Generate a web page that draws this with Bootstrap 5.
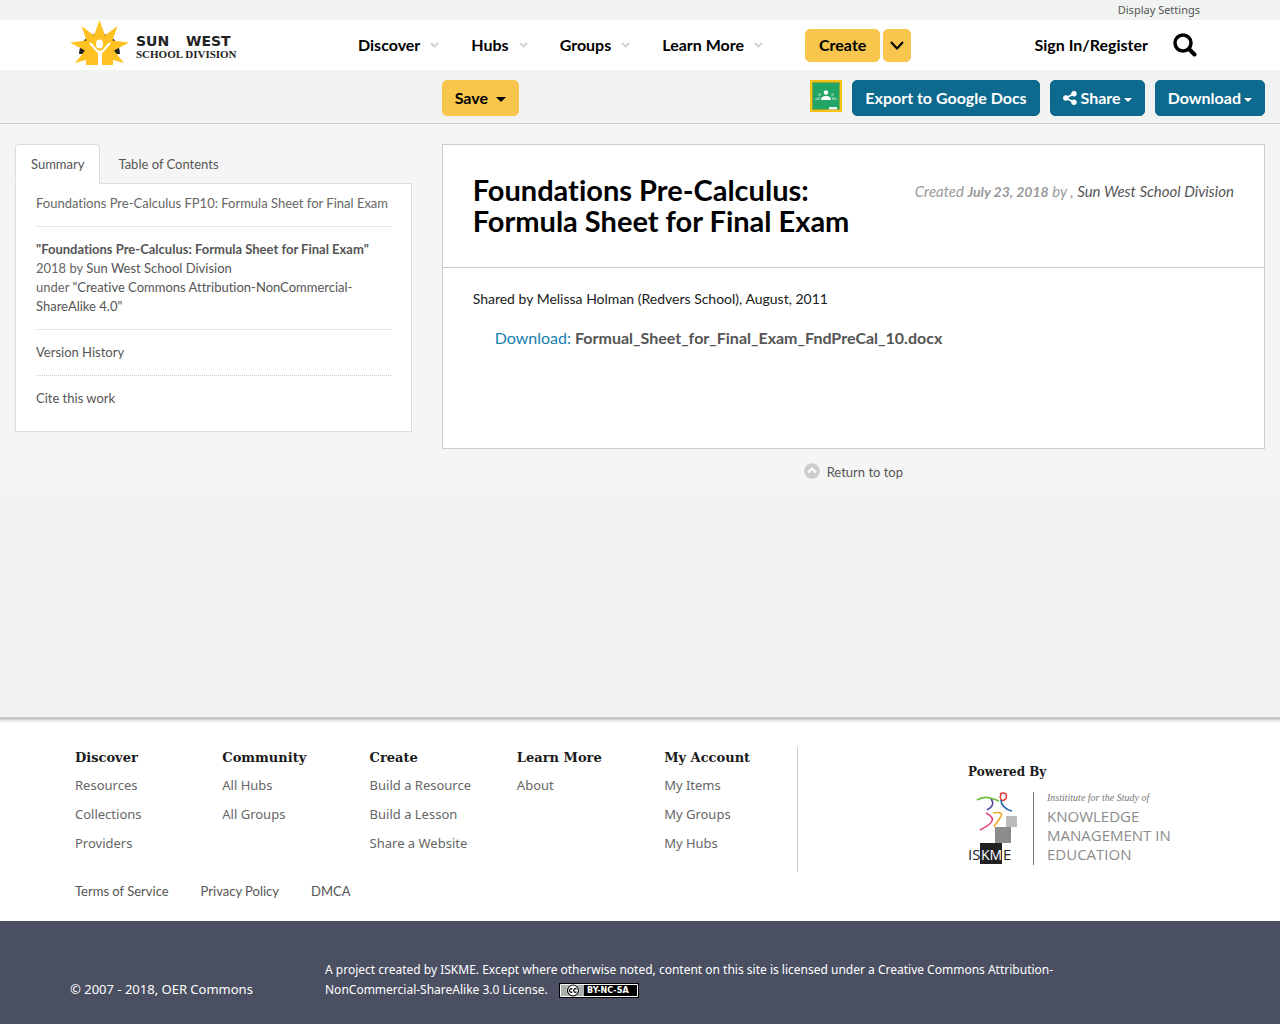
<!DOCTYPE html>
<html lang="en">
<head>
<meta charset="utf-8">
<meta name="viewport" content="width=device-width, initial-scale=1">
<title>Foundations Pre-Calculus: Formula Sheet for Final Exam</title>
<link href="https://cdn.jsdelivr.net/npm/bootstrap@5.3.0/dist/css/bootstrap.min.css" rel="stylesheet">
<style>
:root{--ui:Lato,"Liberation Sans",sans-serif;--alt:"Noto Sans","Open Sans",sans-serif;--slab:"DejaVu Serif",serif}
body{background:#f0f3f2;font-family:var(--ui);font-size:13px;line-height:19px;color:#1a1a1a;min-height:100vh;font-variant-ligatures:none}
a{color:#555;text-decoration:none}
a:hover{text-decoration:underline}
.site-wrap{max-width:1140px;margin:0 auto}
.display-bar{height:20px;font-family:var(--alt);font-size:11px;line-height:20px}
.display-bar .site-wrap{padding-right:10px}
.site-head{background:#fff;height:50px}
.site-nav{font-size:16px;font-weight:700;line-height:20px}
.site-nav a{color:#000}
.main-links{gap:32px;margin-left:124px}
.main-links a{gap:10px}
.search-link{margin:0 13px 0 25px}
.btn-gold{--bs-btn-bg:#f8c54d;--bs-btn-color:#000;--bs-btn-hover-bg:#eeb93c;--bs-btn-hover-color:#000;--bs-btn-border-color:#f8c54d;--bs-btn-hover-border-color:#eeb93c}
.btn-teal{--bs-btn-bg:#0d698d;--bs-btn-color:#fff;--bs-btn-hover-bg:#0a5673;--bs-btn-hover-color:#fff;--bs-btn-border-color:#0d698d;--bs-btn-hover-border-color:#0a5673}
.btn-gold,.btn-teal{--bs-btn-font-weight:700;--bs-btn-font-size:16px;--bs-btn-padding-x:12px;--bs-btn-padding-y:7px;--bs-btn-line-height:20px;--bs-btn-border-radius:5px}
.site-head .btn-gold{--bs-btn-padding-x:13px;--bs-btn-padding-y:5px;height:33px}
.site-head .btn-arrow{--bs-btn-padding-x:6px;margin-left:3px}
.create-group{margin-left:42px}
.tri{display:inline-block;border:4px solid transparent;border-top-color:currentColor;border-bottom:0;vertical-align:middle;margin-left:3px}
.btn-gold .tri{border-width:5px 5px 0;margin-left:8px}
.btn-teal svg{vertical-align:-1px}
.tool-bar{height:54px;border-bottom:1px solid #d0d0d0;padding:10px 15px 0}
.tool-items{gap:10px}
.gut{--bs-gutter-x:30px}
.work-area{background:#f5f5f5;padding:20px 15px 13px}
.side-tabs{--bs-nav-tabs-border-width:1px;border-bottom:1px solid #ddd;height:40px}
.side-tabs .nav-link{color:#555;font-size:13px;padding:9px 15px 10px;line-height:20px;border-radius:4px 4px 0 0;height:40px}
.side-tabs .nav-link.active{border-color:#ddd #ddd #fff;color:#555;background:#fff}
.side-tabs .nav-item+.nav-item{margin-left:2px}
.side-box{background:#fff;border:1px solid #ddd;border-top:0;padding:0 20px 10px;color:#666}
.side-box>div{padding:13px 0;border-bottom:1px dotted #ccc}
.side-box>div:first-child{padding-top:10px}
.side-box>div:last-child{border:0}
.doc-box{background:#fff;border:1px solid #ccc}
.doc-head{padding:29px 30px 31px;border-bottom:1px solid #ccc}
.doc-head h1{font-size:29px;line-height:31px;font-weight:700;color:#000;margin:0;max-width:400px}
.by-line{font-size:15px;line-height:20px;font-style:italic;color:#999;padding-top:7px}
.by-line b{font-size:14px}
.by-line a{color:#555}
.doc-body{padding:20px 30px;min-height:180px;font-size:14px;line-height:22px}
.file-line{font-size:16px;line-height:20px;margin:18px 0 0 22px}
.file-line a{color:#1780ac}.file-line b{color:#555}
.to-top{padding-top:13px;line-height:20px;margin-bottom:0}
.to-top svg{margin-right:7px;vertical-align:-2px}
.site-foot{background:#fff;margin-top:222px;height:204px;box-shadow:inset 0 5px 4px -4px #999;border-top:1px solid #ccc;padding-top:29px}
.foot-links{width:723px;margin-left:5px;border-right:1px solid #ccc;height:125px}
.foot-col{width:20.4%;flex:none}
.slab-head{font-family:var(--slab);font-weight:700;font-size:13px;line-height:22px;color:#1a1a1a;margin:0}
.foot-col ul{font-family:var(--alt);padding-top:2px;margin:0}
.foot-col li{line-height:19px;padding:5px 0}
.foot-col a{color:#666}
.legal{gap:32px;padding:10px 0 0 5px}
.powered{margin:14px 0 0 170px}
.powered .slab-head{font-size:12px}
.base-bar{background:#4a4f62;color:#fff;font-family:var(--alt);font-size:12px;line-height:20px;min-height:103px;padding-top:39px}
.base-bar .copy{width:255px;font-size:13px;padding-top:19px}
.base-bar p{max-width:760px;margin:0}
.base-bar a{color:#fff}
</style>
</head>
<body>
<div class="display-bar"><div class="site-wrap text-end"><a href="#">Display Settings</a></div></div>
<header class="site-head">
 <nav class="site-wrap site-nav d-flex align-items-center h-100">
  <a href="#" aria-label="Sun West School Division" class="align-self-start"><svg width="164" height="48" viewBox="0 0 164 48" class="d-block overflow-visible">
   <path fill="#222" d="M9 34A20.500 20.500 0 1 1 50 34Z"/>
   <path d="M29.500 0 35 15.500 47.500 6 42.500 20.500 59 22.500 44 30.500 54 43 43 40 43 45H16L16 40 5 43 15 30.500 0 22.500 16.500 20.500 11.500 6 24 15.500Z" fill="#ffc222"/>
   <ellipse cx="29.500" cy="24" rx="3.500" ry="4.500" fill="#fff"/>
   <path d="M19.500 22.500Q26 27 28 34V45H32V34Q33 27 40 22.500L32 30.500H27Z" fill="#fff"/><path d="M20 23 28 32M40 23 32 32" stroke="#fff" stroke-width="2"/>
   <g font-family="DejaVu Sans" font-weight="700" font-size="14" fill="#222"><text x="66" y="26">SUN</text><text x="116" y="26">WEST</text></g>
   <text x="66" y="38" font-family="Liberation Serif" font-weight="700" font-size="11" fill="#222">SCHOOL DIVISION</text></svg></a>
  <div class="main-links d-flex">
   <a href="#" class="d-flex align-items-center">Discover <svg width="9" height="6"><path d="M1 1 4.500 4.500 8 1" fill="none" stroke="#d3d3d3" stroke-width="2"/></svg></a>
   <a href="#" class="d-flex align-items-center">Hubs <svg width="9" height="6"><path d="M1 1 4.500 4.500 8 1" fill="none" stroke="#d3d3d3" stroke-width="2"/></svg></a>
   <a href="#" class="d-flex align-items-center">Groups <svg width="9" height="6"><path d="M1 1 4.500 4.500 8 1" fill="none" stroke="#d3d3d3" stroke-width="2"/></svg></a>
   <a href="#" class="d-flex align-items-center">Learn More <svg width="9" height="6"><path d="M1 1 4.500 4.500 8 1" fill="none" stroke="#d3d3d3" stroke-width="2"/></svg></a>
  </div>
  <div class="create-group d-flex"><button type="button" class="btn btn-gold">Create</button><button type="button" class="btn btn-gold btn-arrow d-flex align-items-center" aria-label="More create options"><svg width="14" height="9"><path d="M1 1 7 7.500 13 1" fill="none" stroke="#000" stroke-width="2"/></svg></button></div>
  <a href="#" class="ms-auto">Sign In/Register</a>
  <a href="#" class="search-link" aria-label="Search"><svg width="24" height="24" viewBox="0 0 24 24" class="d-block"><circle cx="10" cy="10" r="8" fill="none" stroke="#000" stroke-width="3.500"/><path d="m16 16 5.500 5.500" stroke="#000" stroke-width="4" stroke-linecap="round"/></svg></a>
 </nav>
</header>
<div class="tool-bar container-fluid"><div class="row gut">
 <div class="col-8 offset-4 d-flex tool-items">
  <button type="button" class="btn btn-gold">Save<span class="tri"></span></button>
  <a href="#" class="ms-auto" aria-label="Google Classroom"><svg width="32" height="32" viewBox="0 0 32 32" class="d-block"><path fill="#fbc117" d="M0 0h32v32H0z"/><path fill="#23a566" stroke="#8aaa3c" d="M2.500 2.500h27v27h-27z"/><circle cx="16" cy="12.500" r="2.200" fill="#fff"/><path fill="#fff" d="M11 20q0-4 5-4t5 4Z"/><g fill="#76c7a0"><circle cx="9.500" cy="14.500" r="1.500"/><circle cx="22.500" cy="14.500" r="1.500"/><path d="M5 20q0-3 5-3l1 0q-2 1-1 3ZM27 20q0-3-5-3l-1 0q2 1 1 3Z"/></g><path d="M19 27h8v2.500h-8z" fill="#f1f1f1"/></svg></a>
  <button type="button" class="btn btn-teal">Export to Google Docs</button>
  <button type="button" class="btn btn-teal"><svg width="14" height="14" viewBox="0 0 14 14"><g fill="#fff"><circle cx="11" cy="2.800" r="2.700"/><circle cx="2.800" cy="7" r="2.700"/><circle cx="11" cy="11.200" r="2.700"/></g><path d="M11 2.800 2.800 7 11 11.200" fill="none" stroke="#fff" stroke-width="1.800"/></svg> Share<span class="tri"></span></button>
  <button type="button" class="btn btn-teal">Download<span class="tri"></span></button>
 </div></div></div>
<main class="work-area container-fluid"><div class="row gut">
 <aside class="col-4">
  <ul class="nav nav-tabs side-tabs"><li class="nav-item"><a class="nav-link active" href="#">Summary</a></li><li class="nav-item"><a class="nav-link" href="#">Table of Contents</a></li></ul>
  <div class="side-box">
   <div>Foundations Pre-Calculus FP10: Formula Sheet for Final Exam</div>
   <div><a href="#"><b>"Foundations Pre-Calculus: Formula Sheet for Final Exam"</b></a><br>2018 by <a href="#">Sun West School Division</a><br>under <a href="#">"Creative Commons Attribution-NonCommercial-ShareAlike 4.0"</a></div>
   <div><a href="#">Version History</a></div>
   <div><a href="#">Cite this work</a></div>
  </div>
 </aside>
 <div class="col-8">
  <article class="doc-box">
   <header class="doc-head d-flex justify-content-between"><h1>Foundations Pre-Calculus: Formula Sheet for Final Exam</h1><div class="by-line">Created <b>July 23, 2018</b> by , <a href="#">Sun West School Division</a></div></header>
   <div class="doc-body">Shared by Melissa Holman (Redvers School), August, 2011<p class="file-line"><a href="#">Download: <b>Formual_Sheet_for_Final_Exam_FndPreCal_10.docx</b></a></p></div>
  </article>
  <p class="to-top text-center"><a href="#"><svg width="16" height="16" viewBox="0 0 16 16"><circle cx="8" cy="8" r="7.800" fill="#ccc"/><path d="M4 9.500 8 5.500 12 9.500" fill="none" stroke="#fff" stroke-width="2.200"/></svg>Return to top</a></p>
 </div></div>
</main>
<footer>
 <div class="site-foot"><div class="site-wrap">
  <div class="d-flex">
   <div class="foot-links d-flex">
    <div class="foot-col"><h2 class="slab-head">Discover</h2><ul class="list-unstyled"><li><a href="#">Resources</a></li><li><a href="#">Collections</a></li><li><a href="#">Providers</a></li></ul></div>
    <div class="foot-col"><h2 class="slab-head">Community</h2><ul class="list-unstyled"><li><a href="#">All Hubs</a></li><li><a href="#">All Groups</a></li></ul></div>
    <div class="foot-col"><h2 class="slab-head">Create</h2><ul class="list-unstyled"><li><a href="#">Build a Resource</a></li><li><a href="#">Build a Lesson</a></li><li><a href="#">Share a Website</a></li></ul></div>
    <div class="foot-col"><h2 class="slab-head">Learn More</h2><ul class="list-unstyled"><li><a href="#">About</a></li></ul></div>
    <div class="foot-col"><h2 class="slab-head">My Account</h2><ul class="list-unstyled"><li><a href="#">My Items</a></li><li><a href="#">My Groups</a></li><li><a href="#">My Hubs</a></li></ul></div>
   </div>
   <div class="powered"><h2 class="slab-head">Powered By</h2>
    <a href="#" aria-label="ISKME"><svg width="206" height="76" viewBox="0 0 206 76" class="mt-2 d-block">
     <path fill="#bbb" d="M38 25h11v11H38z"/><path fill="#8c8c8c" d="M27 36h16v16H27z"/><path fill="#222" d="M12 52h22v21H12z"/><path d="M65.500 1v73" stroke="#777"/>
     <g fill="none" stroke-width="1.600"><path d="M33 3Q31 9 35 9.500 40 8 38 3 35 1 32 3" stroke="#e23a3a"/><path d="M9 9Q15 5 22 7T31 10" stroke="#6bbf3a"/><path d="M23 8Q28 14 19 19" stroke="#5a4da0"/><path d="M33 9Q33 17 44 20" stroke="#2366ab"/><path d="M18 22Q26 26 24 30T12 39" stroke="#e8407f"/><path d="M25 22Q37 20 32 27T26 36" stroke="#f2a82c"/></g>
     <g font-family="Open Sans"><text x="0" y="69" font-size="15" fill="#222">IS</text><text x="13" y="69" font-size="14" fill="#fff">KM</text><text x="35" y="69" font-size="15" fill="#222">E</text></g>
     <text x="79" y="10" font-family="Liberation Serif" font-style="italic" font-size="10" fill="#777">Instititute for the Study of</text>
     <g font-family="Open Sans" font-size="15" fill="#8c8c8c"><text x="79" y="31">KNOWLEDGE</text><text x="79" y="50">MANAGEMENT IN</text><text x="79" y="69">EDUCATION</text></g></svg></a></div>
  </div>
  <div class="legal d-flex"><a href="#">Terms of Service</a><a href="#">Privacy Policy</a><a href="#">DMCA</a></div>
 </div></div>
 <div class="base-bar"><div class="site-wrap d-flex"><div class="copy flex-shrink-0">© 2007 - 2018, OER Commons</div>
  <p>A project created by ISKME. Except where otherwise noted, content on this site is licensed under a <a href="#">Creative Commons Attribution-NonCommercial-ShareAlike 3.0 License</a>. <svg class="ms-2" width="80" height="15" viewBox="0 0 80 15"><path d="M0 0h80v15H0z"/><path fill="none" stroke="#fff" d="M1.500 1.500h77v12h-77z"/><path fill="#aab2ab" d="M2 2h23v11H2z"/><circle cx="14" cy="7.500" r="6.500" fill="#fff"/><circle cx="14" cy="7.500" r="5.500" fill="none" stroke="#000" stroke-width="1.200"/><path d="M13.300 6.200a1.700 1.700 0 1 0 0 2.600M17.500 6.200a1.700 1.700 0 1 0 0 2.600" fill="none" stroke="#000" stroke-width="1.200"/><text x="28" y="10" font-family="DejaVu Sans" font-weight="700" font-size="8" fill="#fff">BY-NC-SA</text></svg></p></div></div>
</footer>
<script src="https://cdn.jsdelivr.net/npm/bootstrap@5.3.0/dist/js/bootstrap.bundle.min.js"></script>
</body>
</html>
